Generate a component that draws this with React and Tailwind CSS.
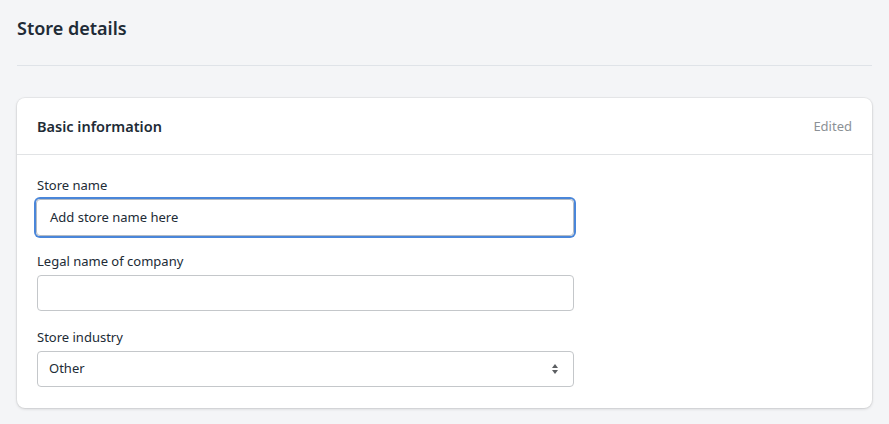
export default function App() {
  const font = { fontFamily: '"Noto Sans", "Open Sans", sans-serif' };
  return (
    <div className="min-h-[424px] w-full bg-[#f4f5f7] text-[#212b36]" style={font}>
      <div className="px-[17px] pt-[14px]">
        <h1 className="text-[18px] leading-[28px] font-semibold text-[#212b36]">Store details</h1>
        <div className="mt-[23px] h-px bg-[#dfe3e8]" />
        <div className="mt-[32px] rounded-[8px] bg-white shadow-[0_0_0_1px_rgba(63,63,68,0.05),0_1px_3px_0_rgba(63,63,68,0.2)]">
          <div className="flex items-center justify-between px-[20px] h-[57px] pt-px border-b border-[#e1e3e5]">
            <h2 className="text-[14.5px] font-semibold text-[#212b36]">Basic information</h2>
            <span className="text-[13px] text-[#8c9196]">Edited</span>
          </div>
          <div className="px-[20px] pt-[20px] pb-[21px] flex flex-col gap-[15px]">
            <div className="flex flex-col">
              <label className="text-[13px] leading-[20px] mb-[4px] text-[#212b36]">Store name</label>
              <div className="w-[538px] h-[37px] rounded-[4px] border border-[#b4bbc4] ring-2 ring-[#4a86d9] flex items-center px-[12px] -ml-px">
                <span className="text-[13px] text-[#212b36] pl-px">Add store name here</span>
              </div>
            </div>
            <div className="flex flex-col mb-[1px]">
              <label className="text-[13px] leading-[20px] mb-[4px] text-[#212b36]">Legal name of company</label>
              <div className="w-[537px] h-[36px] rounded-[4px] border border-[#c4c7ca]" />
            </div>
            <div className="flex flex-col">
              <label className="text-[13px] leading-[20px] mb-[4px] text-[#212b36]">Store industry</label>
              <div className="w-[537px] h-[36px] rounded-[4px] border border-[#c4c7ca] flex items-center justify-between px-[11px]">
                <span className="text-[13px] text-[#212b36]">Other</span>
                <svg width="8" height="12" viewBox="0 0 8 12" className="mr-[3px]">
                  <path d="M4 1 L7 5 L1 5 Z" fill="#5c5f62" />
                  <path d="M4 11 L7 7 L1 7 Z" fill="#5c5f62" />
                </svg>
              </div>
            </div>
          </div>
        </div>
      </div>
    </div>
  );
}
